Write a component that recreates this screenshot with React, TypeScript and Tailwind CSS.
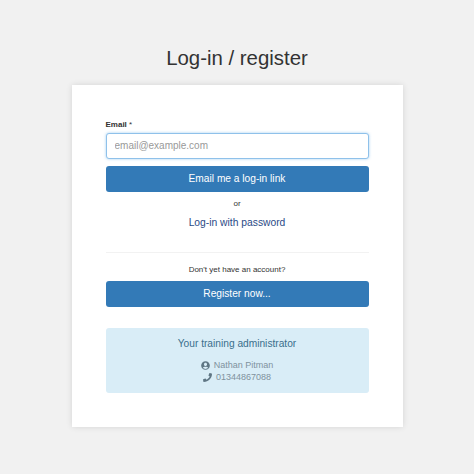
import { FaUserCircle, FaPhone } from "react-icons/fa";

export default function App() {
  return (
    <div className="h-[474px] w-[474px] overflow-hidden bg-[#f1f1f1] pt-[46px] font-['Liberation_Sans',Arial,sans-serif]">
      <h1 className="text-center text-[20.4px] leading-[24px] text-[#333]">Log-in / register</h1>
      <div className="mx-auto mt-[15px] h-[342px] w-[331px] bg-white px-[34px] pt-[35px] shadow-[0_0_6px_rgba(0,0,0,0.12)]">
        <label className="block text-[8px] leading-[10px] font-bold text-[#333]">
          Email <span className="font-normal">*</span>
        </label>
        <input
          placeholder="email@example.com"
          className="mt-[3px] block h-[26px] w-full rounded-[3px] border border-[#8fc1ea] bg-white px-[8px] pb-[1px] text-[10px] text-[#555] shadow-[0_0_3px_rgba(102,175,233,0.6)] outline-none placeholder:text-[#999]"
        />
        <button className="mt-[7px] block h-[26px] w-full rounded-[3px] bg-[#337ab7] text-[10.2px] text-white">
          Email me a log-in link
        </button>
        <p className="mt-[6px] text-center text-[8px] leading-[12px] text-[#333]">or</p>
        <p className="mt-[6px] text-center text-[10.3px] leading-[14px] text-[#2a4a86]">Log-in with password</p>
        <hr className="mt-[22px] border-t border-[#f2f2f2]" />
        <p className="mt-[11px] text-center text-[8px] leading-[12px] text-[#333]">Don't yet have an account?</p>
        <button className="mt-[5px] block h-[26px] w-full rounded-[3px] bg-[#337ab7] pb-[1px] text-[10.2px] text-white">
          Register now...
        </button>
        <div className="mt-[21px] flex h-[65px] flex-col items-center rounded-[3px] bg-[#d9edf7] pt-[9px] text-[#7f929e]">
          <p className="text-[10.2px] leading-[14px] text-[#3a6f8c]">Your training administrator</p>
          <p className="mt-[8px] flex items-center gap-[4px] text-[9px] leading-[12px]">
            <FaUserCircle className="h-[9px] w-[9px] text-[#5f7684]" />
            Nathan Pitman
          </p>
          <p className="flex items-center gap-[4px] text-[9px] leading-[12px]">
            <FaPhone className="h-[9px] w-[9px] text-[#5f7684]" />
            01344867088
          </p>
        </div>
      </div>
    </div>
  );
}
